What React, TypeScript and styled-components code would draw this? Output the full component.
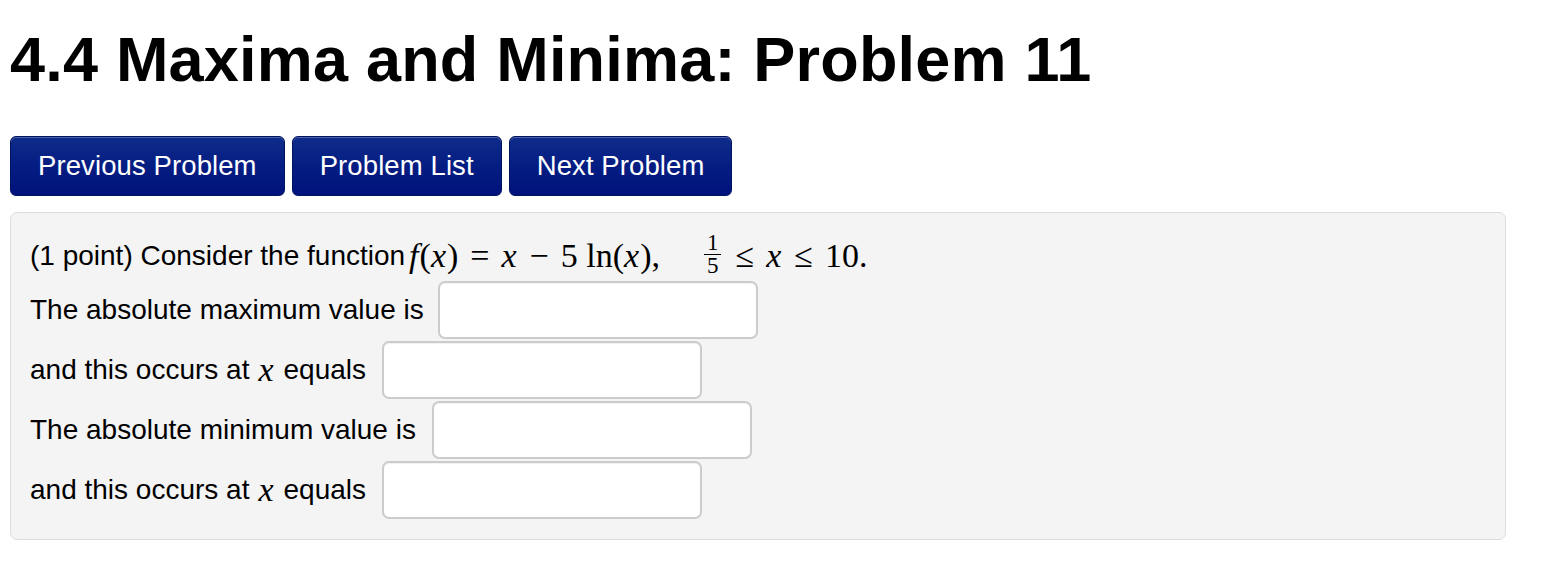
import React from 'react';
import styled, {createGlobalStyle} from 'styled-components';

const GlobalStyle = createGlobalStyle`
  body {
    margin: 0;
    padding: 0 10px;
    background: #FFFFFF;
    font-family: "Liberation Sans", Arial, sans-serif;
    color: #000000;
  }
`;

const Title = styled.h1`
  font-size: 63px;
  font-weight: 700;
  line-height: 74px;
  margin: 22px 0 0;
  letter-spacing: 0.2px;
`;

const Toolbar = styled.div`
  display: flex;
  gap: 7px;
  margin-top: 40px;
`;

const NavButton = styled.button`
  height: 60px;
  padding: 0 27px;
  border: 1px solid #00135f;
  border-radius: 6px;
  background: linear-gradient(to bottom, #0e2c8a 0%, #051d82 50%, #00127c 100%);
  box-shadow: inset 0 1px 0 rgba(255, 255, 255, 0.25);
  color: #FFFFFF;
  font-family: "Liberation Sans", Arial, sans-serif;
  font-size: 27.5px;
  letter-spacing: 0.1px;
  cursor: pointer;
`;

const Panel = styled.div`
  margin-top: 16px;
  width: 1496px;
  box-sizing: border-box;
  padding: 19px 19px;
  background: #F4F4F4;
  border: 1px solid #DCDCDC;
  border-radius: 7px;
`;

const Statement = styled.div`
  height: 48px;
  display: flex;
  align-items: center;
  font-size: 28px;
  white-space: nowrap;
`;

const Math = styled.span<{gap?: number}>`
  font-family: "Liberation Serif", "Times New Roman", serif;
  font-size: 34px;
  margin-left: ${p => p.gap ?? 0}px;
  display: inline-flex;
  align-items: center;
`;

const Var = styled.i`
  font-style: italic;
  margin-right: 1px;
`;

const Op = styled.span<{space: number}>`
  margin: 0 ${p => p.space}px;
`;

const Frac = styled.span`
  display: inline-flex;
  flex-direction: column;
  align-items: center;
  font-size: 23px;
  line-height: 21px;
  margin-right: 2px;
  transform: translateY(-2px);

  span:first-child {
    border-bottom: 1px solid #000;
    padding: 0 3px 1px;
  }
`;

const Row = styled.div`
  display: flex;
  align-items: center;
  height: 60px;
  font-size: 28px;
  white-space: nowrap;
`;

const InlineVar = styled.i`
  font-family: "Liberation Serif", "Times New Roman", serif;
  font-size: 34px;
  margin: 0 10px 0 9px;
`;

const AnswerInput = styled.input<{offset: number}>`
  width: 320px;
  height: 58px;
  box-sizing: border-box;
  margin-left: ${p => p.offset}px;
  border: 2px solid #CCCCCC;
  border-radius: 7px;
  background: #FFFFFF;
  box-shadow: inset 0 1px 1px rgba(0, 0, 0, 0.06);
  outline: none;
`;

type Answer = {
    label: React.ReactNode;
    offset: number;
};

const answers: Answer[] = [
    {label: 'The absolute maximum value is', offset: 14},
    {label: <>and this occurs at<InlineVar>x</InlineVar>equals</>, offset: 16},
    {label: 'The absolute minimum value is', offset: 16},
    {label: <>and this occurs at<InlineVar>x</InlineVar>equals</>, offset: 16},
];

export default function App() {
    return (
        <>
            <GlobalStyle/>
            <Title>4.4 Maxima and Minima: Problem 11</Title>
            <Toolbar>
                <NavButton>Previous Problem</NavButton>
                <NavButton>Problem List</NavButton>
                <NavButton>Next Problem</NavButton>
            </Toolbar>
            <Panel>
                <Statement>
                    (1 point) Consider the function
                    <Math gap={4}>
                        <Var>f</Var>(<Var>x</Var>)
                        <Op space={12}>=</Op>
                        <Var>x</Var>
                        <Op space={12}>−</Op>
                        5&nbsp;ln(<Var>x</Var>),
                    </Math>
                    <Math gap={44}>
                        <Frac><span>1</span><span>5</span></Frac>
                        <Op space={12}>≤</Op>
                        <Var>x</Var>
                        <Op space={12}>≤</Op>
                        10.
                    </Math>
                </Statement>
                {answers.map((a, i) => (
                    <Row key={i}>
                        {a.label}
                        <AnswerInput offset={a.offset}/>
                    </Row>
                ))}
            </Panel>
        </>
    );
}
